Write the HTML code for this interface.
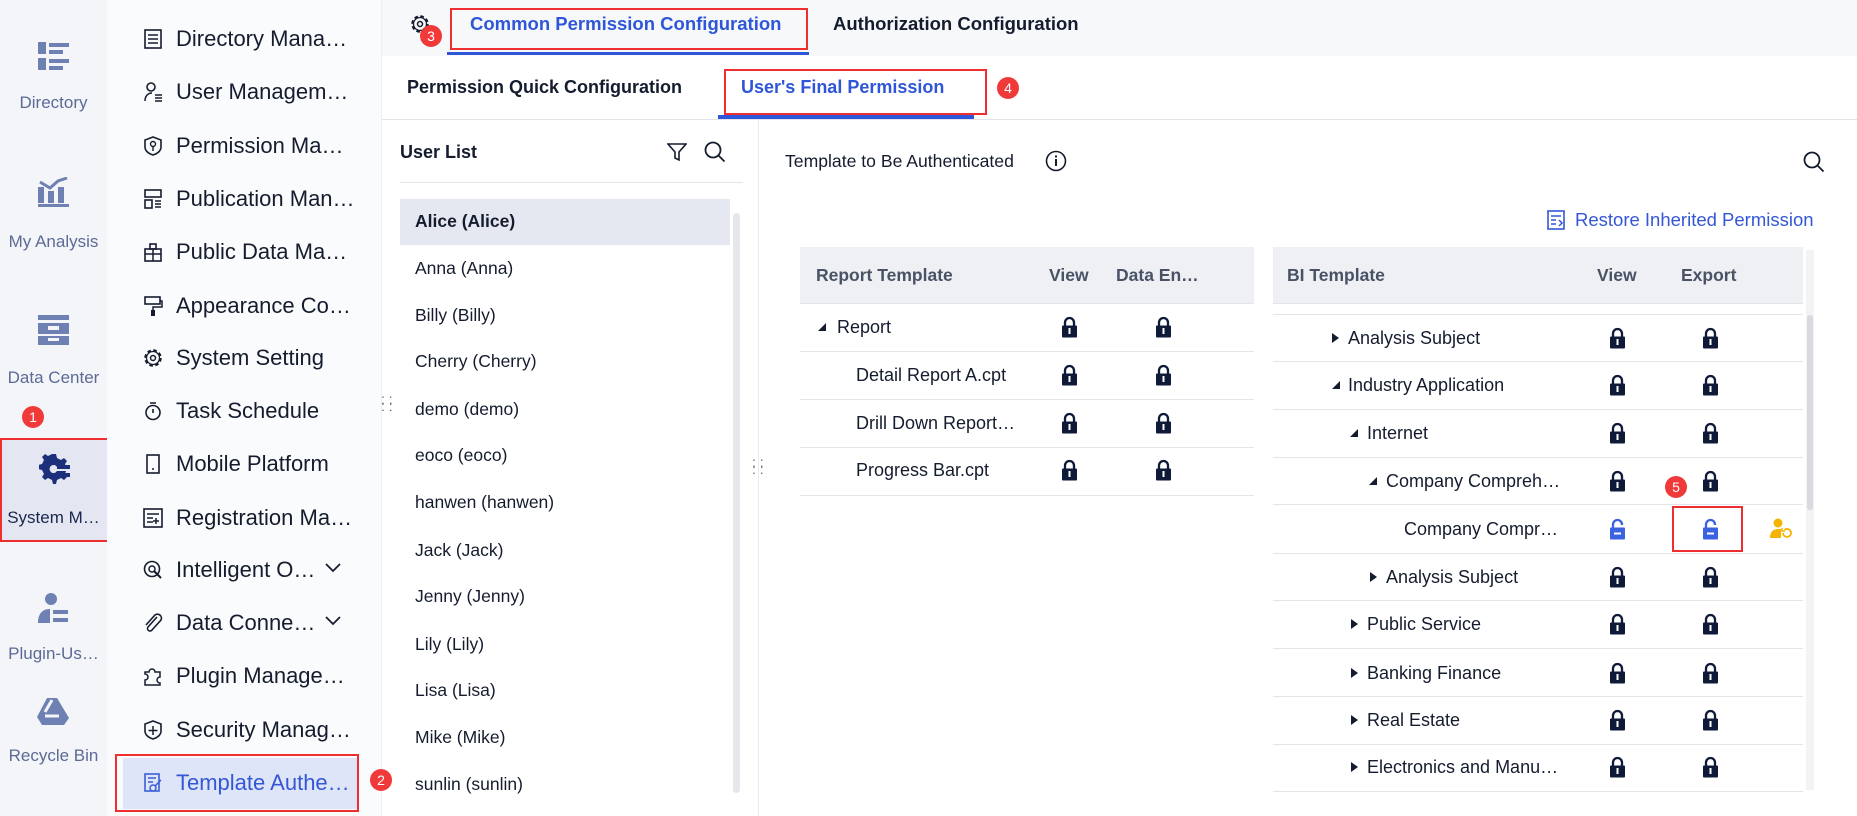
<!DOCTYPE html>
<html><head><meta charset="utf-8"><style>
*{margin:0;padding:0;box-sizing:border-box}
body{width:1857px;height:816px;overflow:hidden;background:#fff;font-family:"Liberation Sans",Arial,sans-serif;color:#141c2e;position:relative}
.a{position:absolute}
.lb{left:0;top:0;width:107px;height:816px;background:#f4f5f9}
.lbl{position:absolute;width:107px;text-align:center;font-size:17px;color:#5c6a95;white-space:nowrap;overflow:hidden}
.nav{left:107px;top:0;width:275px;height:816px;background:#fafbfc;border-right:1px solid #eceef2}
.ni{position:absolute;left:176px;font-size:22px;color:#141c2e;white-space:nowrap;line-height:26px;transform:translateY(-13px)}
.nic{position:absolute;left:143px;width:20px;height:20px;transform:translateY(-10px)}
.badge{position:absolute;width:22px;height:22px;border-radius:11px;background:#f03a3a;color:#fff;font-size:14px;text-align:center;line-height:22px;transform:translate(-11px,-11px)}
.rbox{position:absolute;border:2.5px solid #ef2f2f}
.ul{position:absolute;left:400px;font-size:17.5px;line-height:20px;transform:translateY(-10px);white-space:nowrap}
.t{position:absolute;font-size:18px;line-height:20px;transform:translateY(-10px);white-space:nowrap}
.hl{position:absolute;height:1px;background:#e3e5ea}
.lk{position:absolute;width:17px;height:22px;transform:translate(-8px,-11px)}
.tri{position:absolute;width:0;height:0;transform:translateY(-5px)}
.tr{border-top:5px solid transparent;border-bottom:5px solid transparent;border-left:7px solid #141c2e}
</style></head><body>
<svg width="0" height="0" style="position:absolute"><defs>
<g id="L"><path d="M4 10V6.5a4.5 4.5 0 0 1 9 0V10" fill="none" stroke="#0f1a38" stroke-width="2.3"/><rect x="1" y="9.5" width="15" height="12" rx="1" fill="#0f1a38"/><rect x="7.5" y="12" width="2" height="6" fill="#fff"/></g>
<g id="U"><path d="M4 10V6.5a4.5 4.5 0 0 1 9 0V7" fill="none" stroke="#3b63e0" stroke-width="2.3"/><rect x="1" y="9.5" width="15" height="12" rx="1" fill="#3b63e0"/><rect x="5" y="14.5" width="7" height="2" fill="#fff"/></g>
</defs></svg>

<div class="a lb"></div>
<svg class="a" style="left:38px;top:42px" width="31" height="30"><rect x="0" y="0" width="8" height="12" fill="#6f80b3"/><rect x="11" y="1" width="20" height="4" fill="#6f80b3"/><rect x="11" y="8" width="14" height="4" fill="#6f80b3"/><rect x="0" y="16" width="8" height="12" fill="#6f80b3"/><rect x="11" y="17" width="20" height="4" fill="#6f80b3"/><rect x="11" y="24" width="14" height="4" fill="#6f80b3"/></svg>
<div class="lbl" style="top:93px">Directory</div>
<svg class="a" style="left:38px;top:177px" width="31" height="30"><rect x="0" y="10" width="6" height="16" fill="#6f80b3"/><rect x="10" y="14" width="6" height="12" fill="#6f80b3"/><rect x="20" y="10" width="6" height="16" fill="#6f80b3"/><path d="M2 5l10 6 8-7 9-3" stroke="#6f80b3" stroke-width="3" fill="none"/><rect x="0" y="27" width="31" height="3" fill="#6f80b3"/></svg>
<div class="lbl" style="top:232px">My Analysis</div>
<svg class="a" style="left:38px;top:315px" width="31" height="30"><rect x="0" y="0" width="31" height="5" fill="#6f80b3"/><rect x="0" y="8" width="31" height="11" fill="#6f80b3"/><rect x="0" y="21" width="31" height="9" fill="#6f80b3"/><rect x="10" y="11" width="11" height="4" fill="#f4f5f9"/><rect x="10" y="23" width="11" height="3" fill="#f4f5f9"/></svg>
<div class="lbl" style="top:368px">Data Center</div>
<div class="a" style="left:2px;top:440px;width:107px;height:100px;background:#e4e7f1"></div>
<svg class="a" style="left:39px;top:452px" width="32" height="32"><path d="M14 2l3 0 1 4 4 2 3-2 3 3-2 3 1 3h-9a4 4 0 1 0 0 4h9l-1 3 2 3-3 3-3-2-4 2-1 4h-3l-1-4-4-2-3 2-3-3 2-3-2-4-4-1v-4l4-1 2-4-2-3 3-3 3 2 4-2z" fill="#1c2f7a"/><rect x="18" y="13" width="13" height="4" fill="#1c2f7a"/><rect x="18" y="21" width="13" height="4" fill="#1c2f7a"/></svg>
<div class="lbl" style="top:508px;color:#1a2650">System M…</div>
<div class="rbox" style="left:0;top:438px;width:111px;height:104px"></div>
<div class="badge" style="left:33px;top:417px">1</div>
<svg class="a" style="left:38px;top:592px" width="32" height="32"><circle cx="13" cy="7" r="6" fill="#6f80b3"/><path d="M0 31c0-10 5-14 12-14v14z" fill="#6f80b3"/><rect x="15" y="18" width="15" height="4" fill="#6f80b3"/><rect x="15" y="26" width="15" height="4" fill="#6f80b3"/></svg>
<div class="lbl" style="top:644px">Plugin-Us…</div>
<svg class="a" style="left:37px;top:696px" width="32" height="30"><path d="M10 2h10l12 20-5 7H5L0 21z" fill="#6f80b3"/><path d="M15 4l-7 12M22 20H8" stroke="#f4f5f9" stroke-width="3"/></svg>
<div class="lbl" style="top:746px">Recycle Bin</div>

<div class="a nav"></div>
<div class="a" style="left:123px;top:758px;width:234px;height:51px;background:#dfe5f8"></div>
<div class="rbox" style="left:115px;top:754px;width:244px;height:58px"></div>
<div class="badge" style="left:381px;top:780px">2</div>
<svg class="nic" style="top:39px" viewBox="0 0 20 20"><rect x="2" y="1" width="16" height="18" fill="none" stroke="#141c2e" stroke-width="1.6"/><path d="M5 6h10M5 10h10M5 14h10" stroke="#141c2e" stroke-width="1.5"/></svg>
<div class="ni" style="top:39px">Directory Mana…</div>
<svg class="nic" style="top:92px" viewBox="0 0 20 20"><circle cx="8" cy="5" r="4" fill="none" stroke="#141c2e" stroke-width="1.6"/><path d="M2 19c0-5 3-8 7-8M12 13h7M12 16h7M12 19h7" fill="none" stroke="#141c2e" stroke-width="1.5"/></svg>
<div class="ni" style="top:92px">User Managem…</div>
<svg class="nic" style="top:146px" viewBox="0 0 20 20"><path d="M10 1l8 3v7c0 4-4 7-8 8-4-1-8-4-8-8V4z" fill="none" stroke="#141c2e" stroke-width="1.6"/><circle cx="10" cy="8" r="2.5" fill="none" stroke="#141c2e" stroke-width="1.4"/><path d="M10 10v5" stroke="#141c2e" stroke-width="1.4"/></svg>
<div class="ni" style="top:146px">Permission Ma…</div>
<svg class="nic" style="top:199px" viewBox="0 0 20 20"><rect x="2" y="1" width="16" height="7" fill="none" stroke="#141c2e" stroke-width="1.6"/><rect x="2" y="11" width="7" height="8" fill="none" stroke="#141c2e" stroke-width="1.6"/><path d="M12 12h6M12 15h6M12 18h6" stroke="#141c2e" stroke-width="1.5"/></svg>
<div class="ni" style="top:199px">Publication Man…</div>
<svg class="nic" style="top:252px" viewBox="0 0 20 20"><rect x="2" y="7" width="16" height="12" fill="none" stroke="#141c2e" stroke-width="1.6"/><rect x="7" y="2" width="6" height="5" fill="none" stroke="#141c2e" stroke-width="1.6"/><path d="M2 12h16M10 7v12" stroke="#141c2e" stroke-width="1.5"/></svg>
<div class="ni" style="top:252px">Public Data Ma…</div>
<svg class="nic" style="top:306px" viewBox="0 0 20 20"><rect x="2" y="1" width="15" height="7" fill="none" stroke="#141c2e" stroke-width="1.6"/><path d="M17 5h2v6h-9v3" fill="none" stroke="#141c2e" stroke-width="1.5"/><rect x="8" y="14" width="4" height="6" fill="#141c2e"/></svg>
<div class="ni" style="top:306px">Appearance Co…</div>
<svg class="nic" style="top:358px" viewBox="0 0 20 20"><circle cx="10" cy="10" r="7.5" fill="none" stroke="#141c2e" stroke-width="2.5" stroke-dasharray="3.5 2.4"/><circle cx="10" cy="10" r="6.5" fill="none" stroke="#141c2e" stroke-width="1.3"/><circle cx="10" cy="10" r="2.5" fill="none" stroke="#141c2e" stroke-width="1.5"/></svg>
<div class="ni" style="top:358px">System Setting</div>
<svg class="nic" style="top:411px" viewBox="0 0 20 20"><circle cx="10" cy="11.5" r="7" fill="none" stroke="#141c2e" stroke-width="1.6"/><path d="M7 2h6M10 8v4" stroke="#141c2e" stroke-width="1.6"/></svg>
<div class="ni" style="top:411px">Task Schedule</div>
<svg class="nic" style="top:464px" viewBox="0 0 20 20"><rect x="4" y="1" width="12" height="18" fill="none" stroke="#141c2e" stroke-width="1.6"/><path d="M9 15h2" stroke="#141c2e" stroke-width="1.5"/></svg>
<div class="ni" style="top:464px">Mobile Platform</div>
<svg class="nic" style="top:518px" viewBox="0 0 20 20"><rect x="1" y="1" width="18" height="18" fill="none" stroke="#141c2e" stroke-width="1.6"/><path d="M4 6h12M4 10h6M4 14h6M13 10v6M10 13h6" stroke="#141c2e" stroke-width="1.5"/></svg>
<div class="ni" style="top:518px">Registration Ma…</div>
<svg class="nic" style="top:570px" viewBox="0 0 20 20"><circle cx="9" cy="9" r="7.5" fill="none" stroke="#141c2e" stroke-width="1.6"/><circle cx="9" cy="9" r="3" fill="none" stroke="#141c2e" stroke-width="1.5"/><path d="M11 11l7 7" stroke="#141c2e" stroke-width="2"/></svg>
<div class="ni" style="top:570px">Intelligent O…</div>
<svg class="a" style="left:325px;top:563px" width="16" height="10"><path d="M1 1l7 7 7-7" fill="none" stroke="#141c2e" stroke-width="1.8"/></svg>
<svg class="nic" style="top:623px" viewBox="0 0 20 20"><path d="M14 4l-9 10a2.5 2.5 0 0 0 4 3l9-10a4 4 0 0 0-6-5L3 12" fill="none" stroke="#141c2e" stroke-width="1.6"/></svg>
<div class="ni" style="top:623px">Data Conne…</div>
<svg class="a" style="left:325px;top:616px" width="16" height="10"><path d="M1 1l7 7 7-7" fill="none" stroke="#141c2e" stroke-width="1.8"/></svg>
<svg class="nic" style="top:676px" viewBox="0 0 20 20"><path d="M2 6h4a3 3 0 1 1 6 0h5v5a3 3 0 1 0 0 6v2H2v-5a3 3 0 1 0 0-6z" fill="none" stroke="#141c2e" stroke-width="1.5"/></svg>
<div class="ni" style="top:676px">Plugin Manage…</div>
<svg class="nic" style="top:730px" viewBox="0 0 20 20"><path d="M10 1l8 3v7c0 4-4 7-8 8-4-1-8-4-8-8V4z" fill="none" stroke="#141c2e" stroke-width="1.6"/><path d="M10 6v9M5.5 10.5h9" stroke="#141c2e" stroke-width="1.5"/></svg>
<div class="ni" style="top:730px">Security Manag…</div>
<svg class="nic" style="top:783px" viewBox="0 0 20 20"><rect x="2" y="1" width="14" height="17" fill="none" stroke="#3b5fd6" stroke-width="1.6"/><path d="M5 5h8M5 9h5" stroke="#3b5fd6" stroke-width="1.5"/><circle cx="10" cy="15" r="3" fill="#dfe5f8" stroke="#3b5fd6" stroke-width="1.5"/><path d="M12 13l6-6" stroke="#3b5fd6" stroke-width="1.5"/></svg>
<div class="ni" style="top:783px;color:#3457d5">Template Authe…</div>

<div class="a" style="left:382px;top:0;width:1475px;height:56px;background:#f7f8fa"></div>
<svg class="a" style="left:410px;top:14px" width="20" height="20" viewBox="0 0 20 20"><circle cx="10" cy="10" r="7.5" fill="none" stroke="#141c2e" stroke-width="2.5" stroke-dasharray="3.5 2.4"/><circle cx="10" cy="10" r="6.5" fill="none" stroke="#141c2e" stroke-width="1.3"/><circle cx="10" cy="10" r="2.5" fill="none" stroke="#141c2e" stroke-width="1.5"/></svg>
<div class="badge" style="left:431px;top:36px">3</div>
<div class="t" style="left:470px;top:24px;font-weight:bold;color:#2f56d8;font-size:18.5px">Common Permission Configuration</div>
<div class="a" style="left:447px;top:52px;width:362px;height:3px;background:#2f56d8"></div>
<div class="rbox" style="left:450px;top:8px;width:358px;height:42px"></div>
<div class="t" style="left:833px;top:24px;font-weight:bold;font-size:18.5px">Authorization Configuration</div>

<div class="t" style="left:407px;top:87px;font-weight:bold;font-size:18px">Permission Quick Configuration</div>
<div class="t" style="left:741px;top:87px;font-weight:bold;font-size:18px;color:#2f56d8">User's Final Permission</div>
<div class="a" style="left:382px;top:119px;width:1475px;height:1px;background:#e2e4e9"></div>
<div class="a" style="left:718px;top:115px;width:256px;height:4px;background:#2f56d8"></div>
<div class="rbox" style="left:724px;top:69px;width:263px;height:46px"></div>
<div class="badge" style="left:1008px;top:88px">4</div>

<div class="a" style="left:758px;top:120px;width:1px;height:696px;background:#e8eaee"></div>
<div class="t" style="left:400px;top:152px;font-weight:bold;font-size:18px">User List</div>
<svg class="a" style="left:667px;top:142px" width="20" height="20"><path d="M1 2h18l-7 8v8l-4-2v-6z" fill="none" stroke="#141c2e" stroke-width="1.6"/></svg>
<svg class="a" style="left:704px;top:141px" width="22" height="22"><circle cx="9" cy="9" r="7.5" fill="none" stroke="#141c2e" stroke-width="1.8"/><path d="M14.5 14.5l6 6" stroke="#141c2e" stroke-width="1.8"/></svg>
<div class="hl" style="left:400px;top:182px;width:343px"></div>
<div class="a" style="left:400px;top:199px;width:330px;height:46px;background:#e5e8f0"></div>
<div class="a" style="left:733px;top:213px;width:7px;height:580px;background:#e6e7eb;border-radius:4px"></div>
<div class="ul" style="top:221px;left:415px;font-weight:bold">Alice (Alice)</div>
<div class="ul" style="top:268px;left:415px">Anna (Anna)</div>
<div class="ul" style="top:315px;left:415px">Billy (Billy)</div>
<div class="ul" style="top:361px;left:415px">Cherry (Cherry)</div>
<div class="ul" style="top:409px;left:415px">demo (demo)</div>
<div class="ul" style="top:455px;left:415px">eoco (eoco)</div>
<div class="ul" style="top:502px;left:415px">hanwen (hanwen)</div>
<div class="ul" style="top:550px;left:415px">Jack (Jack)</div>
<div class="ul" style="top:596px;left:415px">Jenny (Jenny)</div>
<div class="ul" style="top:644px;left:415px">Lily (Lily)</div>
<div class="ul" style="top:690px;left:415px">Lisa (Lisa)</div>
<div class="ul" style="top:737px;left:415px">Mike (Mike)</div>
<div class="ul" style="top:784px;left:415px">sunlin (sunlin)</div>
<div class="a" style="left:381px;top:396px;font-size:14px;color:#667;line-height:7px">: :<br>: :</div>
<div class="a" style="left:752px;top:459px;font-size:14px;color:#667;line-height:7px">: :<br>: :</div>

<div class="t" style="left:785px;top:161px;font-size:17.6px">Template to Be Authenticated</div>
<svg class="a" style="left:1045px;top:150px" width="22" height="22"><circle cx="11" cy="11" r="9.5" fill="none" stroke="#141c2e" stroke-width="1.6"/><rect x="10" y="9" width="2" height="7" fill="#141c2e"/><rect x="10" y="5.5" width="2" height="2" fill="#141c2e"/></svg>
<svg class="a" style="left:1803px;top:151px" width="22" height="22"><circle cx="9" cy="9" r="7.5" fill="none" stroke="#141c2e" stroke-width="1.8"/><path d="M14.5 14.5l6 6" stroke="#141c2e" stroke-width="1.8"/></svg>
<svg class="a" style="left:1547px;top:210px" width="20" height="20"><rect x="1" y="1" width="16" height="18" fill="none" stroke="#3457d5" stroke-width="1.6"/><path d="M4 6h10M4 10h5M4 14h5M12 10l3 3-3 3" fill="none" stroke="#3457d5" stroke-width="1.5"/></svg>
<div class="t" style="left:1575px;top:220px;color:#3457d5;font-size:18.5px">Restore Inherited Permission</div>

<div class="a" style="left:800px;top:247px;width:454px;height:56px;background:#eef0f4"></div>
<div class="t" style="left:816px;top:275px;font-weight:bold;color:#4a5266;font-size:17.5px">Report Template</div>
<div class="t" style="left:1049px;top:275px;font-weight:bold;color:#4a5266;font-size:17.5px">View</div>
<div class="t" style="left:1116px;top:275px;font-weight:bold;color:#4a5266;font-size:17.5px">Data En…</div>
<div class="hl" style="left:800px;top:303px;width:454px"></div>
<div class="hl" style="left:800px;top:351px;width:454px"></div>
<div class="hl" style="left:800px;top:399px;width:454px"></div>
<div class="hl" style="left:800px;top:447px;width:454px"></div>
<div class="hl" style="left:800px;top:495px;width:454px"></div>
<div class="tri" style="left:818px;top:328px;border-left:8px solid transparent;border-bottom:8px solid #141c2e"></div>
<div class="t" style="left:837px;top:327px">Report</div>
<div class="t" style="left:856px;top:375px">Detail Report A.cpt</div>
<div class="t" style="left:856px;top:423px">Drill Down Report…</div>
<div class="t" style="left:856px;top:470px">Progress Bar.cpt</div>
<svg class="lk" style="left:1069px;top:327px"><use href="#L"/></svg><svg class="lk" style="left:1163px;top:327px"><use href="#L"/></svg>
<svg class="lk" style="left:1069px;top:375px"><use href="#L"/></svg><svg class="lk" style="left:1163px;top:375px"><use href="#L"/></svg>
<svg class="lk" style="left:1069px;top:423px"><use href="#L"/></svg><svg class="lk" style="left:1163px;top:423px"><use href="#L"/></svg>
<svg class="lk" style="left:1069px;top:470px"><use href="#L"/></svg><svg class="lk" style="left:1163px;top:470px"><use href="#L"/></svg>

<div class="a" style="left:1273px;top:247px;width:530px;height:56px;background:#eef0f4"></div>
<div class="t" style="left:1287px;top:275px;font-weight:bold;color:#4a5266;font-size:17.5px">BI Template</div>
<div class="t" style="left:1597px;top:275px;font-weight:bold;color:#4a5266;font-size:17.5px">View</div>
<div class="t" style="left:1681px;top:275px;font-weight:bold;color:#4a5266;font-size:17.5px">Export</div>
<div class="a" style="left:1806px;top:250px;width:8px;height:540px;background:#f2f3f5"></div>
<div class="a" style="left:1807px;top:315px;width:6px;height:195px;background:#d8dade;border-radius:3px"></div>
<div class="hl" style="left:1273px;top:303px;width:530px"></div>
<div class="hl" style="left:1273px;top:314px;width:530px"></div>
<div class="hl" style="left:1273px;top:361px;width:530px"></div>
<div class="hl" style="left:1273px;top:409px;width:530px"></div>
<div class="hl" style="left:1273px;top:457px;width:530px"></div>
<div class="hl" style="left:1273px;top:504px;width:530px"></div>
<div class="hl" style="left:1273px;top:553px;width:530px"></div>
<div class="hl" style="left:1273px;top:600px;width:530px"></div>
<div class="hl" style="left:1273px;top:648px;width:530px"></div>
<div class="hl" style="left:1273px;top:696px;width:530px"></div>
<div class="hl" style="left:1273px;top:744px;width:530px"></div>
<div class="hl" style="left:1273px;top:791px;width:530px"></div>

<div class="tri tr" style="left:1332px;top:338px"></div><div class="t" style="left:1348px;top:338px">Analysis Subject</div>
<div class="tri" style="left:1332px;top:386px;border-left:8px solid transparent;border-bottom:8px solid #141c2e"></div><div class="t" style="left:1348px;top:385px">Industry Application</div>
<div class="tri" style="left:1350px;top:434px;border-left:8px solid transparent;border-bottom:8px solid #141c2e"></div><div class="t" style="left:1367px;top:433px">Internet</div>
<div class="tri" style="left:1369px;top:482px;border-left:8px solid transparent;border-bottom:8px solid #141c2e"></div><div class="t" style="left:1386px;top:481px">Company Compreh…</div>
<div class="t" style="left:1404px;top:529px">Company Compr…</div>
<div class="tri tr" style="left:1370px;top:577px"></div><div class="t" style="left:1386px;top:577px">Analysis Subject</div>
<div class="tri tr" style="left:1351px;top:624px"></div><div class="t" style="left:1367px;top:624px">Public Service</div>
<div class="tri tr" style="left:1351px;top:673px"></div><div class="t" style="left:1367px;top:673px">Banking Finance</div>
<div class="tri tr" style="left:1351px;top:720px"></div><div class="t" style="left:1367px;top:720px">Real Estate</div>
<div class="tri tr" style="left:1351px;top:767px"></div><div class="t" style="left:1367px;top:767px">Electronics and Manu…</div>

<svg class="lk" style="left:1617px;top:338px"><use href="#L"/></svg><svg class="lk" style="left:1710px;top:338px"><use href="#L"/></svg>
<svg class="lk" style="left:1617px;top:385px"><use href="#L"/></svg><svg class="lk" style="left:1710px;top:385px"><use href="#L"/></svg>
<svg class="lk" style="left:1617px;top:433px"><use href="#L"/></svg><svg class="lk" style="left:1710px;top:433px"><use href="#L"/></svg>
<svg class="lk" style="left:1617px;top:481px"><use href="#L"/></svg><svg class="lk" style="left:1710px;top:481px"><use href="#L"/></svg>
<svg class="lk" style="left:1617px;top:529px"><use href="#U"/></svg><svg class="lk" style="left:1710px;top:529px"><use href="#U"/></svg>
<svg class="lk" style="left:1617px;top:577px"><use href="#L"/></svg><svg class="lk" style="left:1710px;top:577px"><use href="#L"/></svg>
<svg class="lk" style="left:1617px;top:624px"><use href="#L"/></svg><svg class="lk" style="left:1710px;top:624px"><use href="#L"/></svg>
<svg class="lk" style="left:1617px;top:673px"><use href="#L"/></svg><svg class="lk" style="left:1710px;top:673px"><use href="#L"/></svg>
<svg class="lk" style="left:1617px;top:720px"><use href="#L"/></svg><svg class="lk" style="left:1710px;top:720px"><use href="#L"/></svg>
<svg class="lk" style="left:1617px;top:767px"><use href="#L"/></svg><svg class="lk" style="left:1710px;top:767px"><use href="#L"/></svg>
<div class="rbox" style="left:1672px;top:506px;width:71px;height:46px"></div>
<div class="badge" style="left:1676px;top:487px">5</div>
<svg class="a" style="left:1770px;top:518px" width="22" height="22"><circle cx="8" cy="5" r="4.5" fill="#f5b400"/><path d="M0 20c0-6 3-9 8-9h3v9z" fill="#f5b400"/><path d="M13 15a4 4 0 1 0 1.5-3.2" fill="none" stroke="#f5b400" stroke-width="1.8"/><path d="M12 10v3h3" fill="none" stroke="#f5b400" stroke-width="1.5"/></svg>
</body></html>
